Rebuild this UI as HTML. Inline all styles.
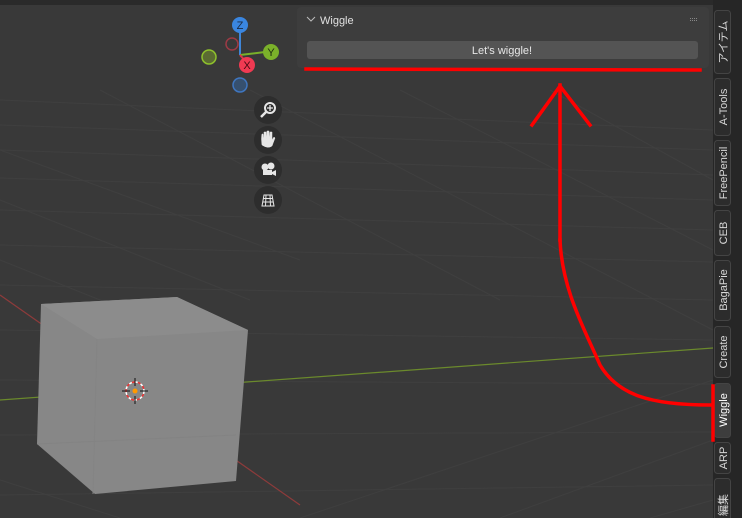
<!DOCTYPE html>
<html><head><meta charset="utf-8"><style>
html,body{margin:0;padding:0;width:742px;height:518px;overflow:hidden;background:#393939;font-family:"Liberation Sans","Noto Sans CJK JP",sans-serif}
</style></head><body>
<svg width="742" height="518" viewBox="0 0 742 518" xmlns="http://www.w3.org/2000/svg" style="position:absolute;left:0;top:0">
<rect width="742" height="518" fill="#393939"/>
<rect width="742" height="5" fill="#2a2a2a"/>
<g stroke="#444" stroke-width="1" fill="none" opacity="0.6">
<path d="M0 100 L713 130 M0 125 L713 150 M0 150 L713 175 M0 178 L713 200 M0 210 L713 230 M0 245 L713 262 M0 285 L713 300 M0 330 L713 340 M0 380 L713 384 M0 435 L713 432 M0 495 L713 485"/>
<path d="M0 150 L300 260 M0 200 L250 300 M0 260 L200 340 M100 90 L500 300 M250 90 L713 330 M400 90 L713 250 M550 90 L713 180 M300 518 L713 380 M500 518 L713 440 M0 480 L120 518 M650 518 L713 500"/>
</g>
<line x1="0" y1="295" x2="300" y2="505" stroke="#8e3b3b" stroke-width="1.2"/>
<line x1="0" y1="400" x2="713" y2="348" stroke="#6b8a2c" stroke-width="1.2"/>
<polygon points="41,304 177,297 248,330 236,481 95,494 37,444" fill="#878787"/>
<polygon points="41,304 177,297 248,330 97,339" fill="#8c8c8c"/>
<polyline points="97,339 93,494" stroke="#848484" fill="none"/>
<line x1="37" y1="444" x2="236" y2="435" stroke="#838383"/>
<g transform="translate(135,391)"><circle r="9" fill="none" stroke="#fff" stroke-width="1.5" stroke-dasharray="3 3"/><circle r="9" fill="none" stroke="#e33" stroke-width="1.5" stroke-dasharray="3 3" stroke-dashoffset="3"/><path d="M0 -13V-5M0 5V13M-13 0H-5M5 0H13" stroke="#111"/><circle r="2.5" fill="#f90"/></g>
<line x1="240" y1="55" x2="240" y2="30" stroke="#3f86d8" stroke-width="2"/>
<line x1="240" y1="55" x2="265" y2="52" stroke="#79b02a" stroke-width="2"/>
<line x1="240" y1="55" x2="246" y2="62" stroke="#e0304a" stroke-width="2"/>
<circle cx="232" cy="44" r="6" fill="none" stroke="#9c3a45" stroke-width="1.5"/>
<circle cx="209" cy="57" r="7" fill="#5b6b32" stroke="#8fc22c" stroke-width="1.5"/>
<circle cx="240" cy="85" r="7" fill="#36506f" stroke="#3f76c0" stroke-width="1.5"/>
<circle cx="240" cy="25" r="8" fill="#3a86e0"/><text x="240" y="29" font-size="11" text-anchor="middle" fill="#1a2a44">Z</text>
<circle cx="271" cy="52" r="8" fill="#7bb12a"/><text x="271" y="56" font-size="11" text-anchor="middle" fill="#203010">Y</text>
<circle cx="247" cy="65" r="8" fill="#f03a52"/><text x="247" y="69" font-size="11" text-anchor="middle" fill="#4a0a12">X</text>
<g fill="#2d2d2d"><circle cx="268" cy="110" r="14"/><circle cx="268" cy="140" r="14"/><circle cx="268" cy="170" r="14"/><circle cx="268" cy="200" r="14"/></g>
<g fill="#e6e6e6" stroke="#e6e6e6">
<circle cx="270" cy="108" r="5" fill="none" stroke-width="2"/><path d="M266 112 L261 117" stroke-width="2.5"/><path d="M270 105v6M267 108h6" stroke-width="1.3"/>
<path d="M262 145 Q261 138 262 134 L263 134 L264 140 L264 132 L266 132 L266 139 L267 131 L269 131 L269 139 L270 132 L272 132 L272 140 L274 137 L275 138 L272 146 Q268 149 262 145Z" stroke-width="0.5"/>
<circle cx="265" cy="167" r="3.5" stroke="none"/><circle cx="271" cy="166" r="3.5" stroke="none"/><rect x="263" y="170" width="9" height="5" stroke="none"/><path d="M272 172 L276 170 V176 L272 174Z" stroke="none"/>
<path d="M262 206 L264 195 H272 L274 206 Z M262.5 202 H273.5 M263.3 198.5 H272.7 M266 195 L265.5 206 M270 195 L270.5 206" fill="none" stroke-width="1"/>
</g>
<rect x="297" y="7" width="412" height="61" rx="4" fill="#3d3d3d"/>
<path d="M307 17 L311 21 L315 17" stroke="#bbb" fill="none" stroke-width="1"/>
<text x="320" y="24" font-size="11" fill="#e0e0e0">Wiggle</text>
<g fill="#888"><rect x="690" y="18" width="1" height="1"/><rect x="692" y="18" width="1" height="1"/><rect x="694" y="18" width="1" height="1"/><rect x="696" y="18" width="1" height="1"/><rect x="690" y="20" width="1" height="1"/><rect x="692" y="20" width="1" height="1"/><rect x="694" y="20" width="1" height="1"/><rect x="696" y="20" width="1" height="1"/></g>
<rect x="307" y="41" width="391" height="18" rx="3" fill="#545454"/>
<text x="502" y="54" font-size="11" text-anchor="middle" fill="#e6e6e6">Let's wiggle!</text>
<rect x="713" y="0" width="29" height="518" fill="#262626"/>
<g fill="#2c2c2c" stroke="#444" stroke-width="1">
<rect x="714.5" y="10.5" width="16" height="63" rx="3"/>
<rect x="714.5" y="78.5" width="16" height="57" rx="3"/>
<rect x="714.5" y="140.5" width="16" height="65" rx="3"/>
<rect x="714.5" y="210.5" width="16" height="45" rx="3"/>
<rect x="714.5" y="260.5" width="16" height="60" rx="3"/>
<rect x="714.5" y="326.5" width="16" height="51" rx="3"/>
<rect x="714.5" y="383.5" width="16" height="54" rx="3" fill="#3d3d3d"/>
<rect x="714.5" y="442.5" width="16" height="31" rx="3"/>
<rect x="714.5" y="478.5" width="16" height="45" rx="3"/>
</g>
<g font-size="11" fill="#d8d8d8" text-anchor="middle">
<text transform="translate(727,42) rotate(-90)">アイテム</text>
<text transform="translate(727,107) rotate(-90)">A-Tools</text>
<text transform="translate(727,173) rotate(-90)">FreePencil</text>
<text transform="translate(727,233) rotate(-90)">CEB</text>
<text transform="translate(727,290) rotate(-90)">BagaPie</text>
<text transform="translate(727,352) rotate(-90)">Create</text>
<text transform="translate(727,410) rotate(-90)" fill="#fff">Wiggle</text>
<text transform="translate(727,458) rotate(-90)">ARP</text>
<text transform="translate(727,505) rotate(-90)">編集</text>
</g>
<g stroke="#ff0000" fill="none" stroke-width="3.5" stroke-linecap="square">
<path d="M306 69 L700 70"/>
<path d="M560 240 L560 85"/>
<path d="M532 125 L560 86 L590 125"/>
<path d="M560 240 C562 290 585 330 600 365 C618 395 650 405 710 405"/>
<path d="M713 386 L713 440"/>
</g>
</svg>
</body></html>
